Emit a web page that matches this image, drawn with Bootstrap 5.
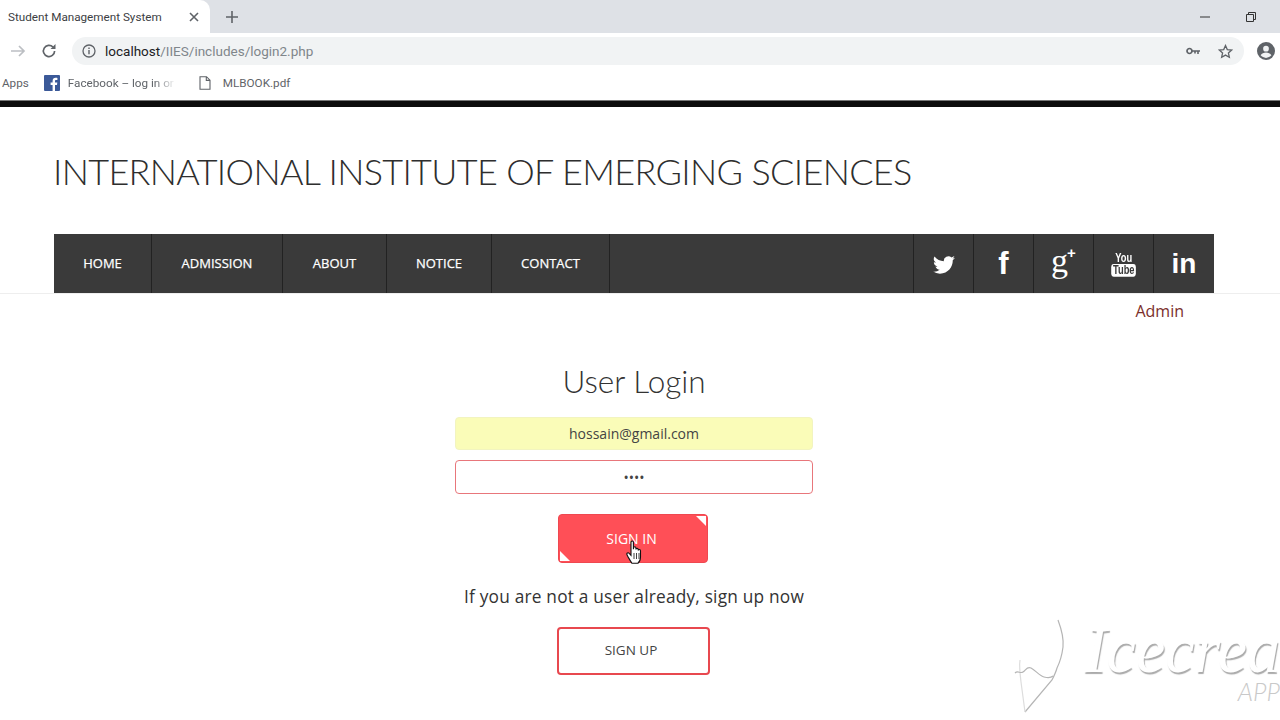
<!DOCTYPE html>
<html lang="en">
  <head>
    <meta charset="UTF-8" />
    <title>Student Management System</title>
    <link href="https://cdn.jsdelivr.net/npm/bootstrap@5.3.0/dist/css/bootstrap.min.css" rel="stylesheet" />
    <style>
      html, body { height: 720px; overflow: hidden; }
      body { font-family: "Open Sans", "Liberation Sans", sans-serif; background: #fff; color: #333; position: relative; }

      /* browser chrome */
      .tab-strip { height: 33px; background: #dee1e6; }
      .tab-active { width: 210px; background: #fff; border-top-right-radius: 10px; font: 11.7px "Roboto", "Liberation Sans", sans-serif; color: #3c4043; padding: 0 11px 0 8px; }
      .tab-plus { margin-left: 15px; }
      .win-btns { gap: 36px; padding-right: 24px; }
      .addr-row { height: 33px; padding: 3px 5px 0 10px; }
      .addr-pill { height: 28px; flex: 0 0 1172px; margin-left: 15px; background: #f1f3f4; border-radius: 14px; padding: 0 11px 0 10px; font: 13.5px "Roboto", "Liberation Sans", sans-serif; color: #80868b; }
      .addr-host { color: #202124; margin-left: 1px; }
      .reload-icon { margin-left: 15px; }
      .key-icon { margin-right: 18px; }
      .marks-row { height: 34px; font: 11.7px "Roboto", "Liberation Sans", sans-serif; color: #5f6368; padding-left: 2px; }
      .marks-fb { margin-left: 15px; }
      .marks-file { margin-left: 23px; }
      .marks-fade { width: 108px; white-space: nowrap; -webkit-mask-image: linear-gradient(90deg, #000 80%, transparent); mask-image: linear-gradient(90deg, #000 80%, transparent); }
      .chrome-edge { height: 7px; background: #0c0c0c; border-top: 1px solid #777; }

      /* site header */
      .site-head { border-bottom: 1px solid #eee; padding-left: 54px; }
      .site-title { height: 127px; margin: 0 0 0 -1px; padding-top: 43px; font: 300 36px/42px "Lato", "Liberation Sans", sans-serif; color: #2e2e2e; letter-spacing: -.67px; white-space: nowrap; }
      .site-nav { width: 1160px; height: 59px; background: #3a3a3a; }
      .nav-cell { height: 59px; display: flex; align-items: center; justify-content: center; color: #fff; font-size: 13px; font-weight: 500; -webkit-text-stroke: .25px #fff; text-decoration: none; border-right: 1px solid #222; }
      .nav-cell.w1 { width: 98px; }
      .nav-cell.w2 { width: 131px; }
      .nav-cell.w3 { width: 104px; }
      .nav-cell.w4 { width: 105px; }
      .nav-cell.w5 { width: 118px; }
      .soc-cell { width: 60px; height: 59px; display: flex; align-items: center; justify-content: center; color: #fff; text-decoration: none; border-left: 1px solid #222; }
      .soc-f { font: 700 31px/1 "Liberation Sans", sans-serif; }
      .soc-g { font: 400 34px/1 "Liberation Serif", serif; padding-bottom: 5px; }
      .soc-g sup { font: 700 15px/1 "Liberation Sans", sans-serif; top: -.6em; margin-left: -1px; }
      .soc-in { font: 700 28px/1 "Liberation Sans", sans-serif; width: 61px; }
      .soc-yt { text-align: center; font: 700 11px/11px "Liberation Sans Narrow", "Liberation Sans", sans-serif; }
      .soc-yt span { display: block; transform: scale(.85, 1.15); }
      .soc-yt b { display: block; background: #fff; color: #3a3a3a; border-radius: 3px; padding: 0 2px; }

      /* login area */
      .admin-link { padding: 5px 96px 0 0; height: 36px; text-align: right; font-size: 16px; color: #7b2f2a; text-decoration: none; display: block; }
      .login-wrap { width: 358px; margin-left: 455px; text-align: center; }
      .login-head { margin: 31px 0 16px; font: 300 31.5px/40px "Lato", "Liberation Sans", sans-serif; color: #333; }
      .login-input.form-control { height: 33px; font-size: 14px; text-align: center; border-radius: 4px; color: #444; padding: 0; box-shadow: none; }
      .input-mail.form-control { background: #fafcb8; border-color: #f2f4c0; margin-bottom: 10px; }
      .input-pass.form-control { height: 34px; border: 1px solid #e8767b; }
      .signin-btn { position: relative; overflow: hidden; display: block; width: 150px; height: 49px; margin: 20px auto 0 103px; background: #ff4f57; border: 1px solid #ef4850; border-radius: 4px; color: #fff; font-size: 14px; font-weight: 500; padding: 0 3px 0 0; }
      .signin-btn:hover { background: #ff4f57; color: #fff; }
      .corner-tr, .corner-bl { position: absolute; width: 0; height: 0; }
      .corner-tr { top: 1px; right: 1px; border-top: 10px solid #fff; border-left: 10px solid transparent; }
      .corner-bl { bottom: 1px; left: 1px; border-bottom: 10px solid #fff; border-right: 10px solid transparent; }
      .signup-note { margin: 22px -20px 18px; font-size: 17.3px; line-height: 24px; color: #333; letter-spacing: .2px; white-space: nowrap; }
      .signup-btn { display: block; width: 153px; height: 48px; margin-left: 102px; background: #fff; border: 2px solid #e8484f; border-radius: 4px; color: #444; font-size: 13.5px; padding: 0 5px 2px 0; }
      .hand-cursor { position: absolute; left: 626px; top: 540px; }

      /* recorder watermark */
      .wm-mark { position: absolute; left: 1014px; top: 617px; }
      .wm-name { position: absolute; right: 0; top: 625px; font: italic 400 66px/50px "Liberation Serif", serif; color: #fff; text-shadow: 1px 2px 1px #aaa; white-space: nowrap; }
      .wm-sub { position: absolute; right: 0; top: 680px; font: italic 300 25px/22px "Lato", sans-serif; color: #c9c9c9; }
    </style>
  </head>
  <body>
    <div class="tab-strip d-flex align-items-stretch">
      <div class="tab-active d-flex align-items-center justify-content-between">
        <span>Student Management System</span>
        <svg width="10" height="10" viewBox="0 0 10 10"><path d="M1 1l8 8M9 1l-8 8" stroke="#5f6368" stroke-width="1.6"/></svg>
      </div>
      <div class="tab-plus d-flex align-items-center">
        <svg width="14" height="14" viewBox="0 0 14 14"><path d="M7 1v12M1 7h12" stroke="#5f6368" stroke-width="1.6"/></svg>
      </div>
      <div class="win-btns ms-auto d-flex align-items-center">
        <svg width="10" height="10" viewBox="0 0 10 10"><path d="M0 5h10" stroke="#333" stroke-width="1"/></svg>
        <svg width="10" height="10" viewBox="0 0 10 10" fill="none" stroke="#333"><path d="M.5 2.500h7v7h-7zM2.500 2.500v-2h7v7h-2"/></svg>
      </div>
    </div>
    <div class="addr-row d-flex align-items-center">
      <svg width="16" height="14" viewBox="0 0 16 14"><path d="M1 7h13M9 2l5 5-5 5" fill="none" stroke="#bcbfc3" stroke-width="1.700"/></svg>
      <svg class="reload-icon" width="16" height="16" viewBox="0 0 16 16"><path d="M13.600 8a5.600 5.600 0 1 1-1.600-4" fill="none" stroke="#5f6368" stroke-width="1.700"/><path d="M14.500 1v5h-5z" fill="#5f6368"/></svg>
      <div class="addr-pill d-flex align-items-center">
        <svg width="14" height="14" viewBox="0 0 14 14" class="me-2"><circle cx="7" cy="7" r="6" fill="none" stroke="#5f6368" stroke-width="1.300"/><path d="M7 6v4.200M7 3.600v1.400" stroke="#5f6368" stroke-width="1.400"/></svg>
        <span><span class="addr-host">localhost</span>/IIES/includes/login2.php</span>
        <svg class="key-icon ms-auto" width="14" height="8" viewBox="0 0 14 8"><circle cx="3.500" cy="4" r="2.500" fill="none" stroke="#5f6368" stroke-width="1.700"/><path d="M6 3.200h8v1.600h-1.200V7h-1.600V4.800H9.800V6.400H8.200V4.800H6z" fill="#5f6368"/></svg>
        <svg width="15" height="15" viewBox="0 0 16 16"><path d="M8 1.600l1.900 4.300 4.700.5-3.500 3.100 1 4.600L8 11.800l-4.100 2.300 1-4.600-3.500-3.100 4.700-.5z" fill="none" stroke="#5f6368" stroke-width="1.400"/></svg>
      </div>
      <svg class="ms-auto" width="18" height="18" viewBox="0 0 17 17"><circle cx="8.500" cy="8.500" r="8.500" fill="#5f6368"/><circle cx="8.500" cy="6.300" r="2.700" fill="#f1f3f4"/><path d="M3.400 12.600c1-2 3.200-2.700 5.100-2.700s4.100.7 5.100 2.700c-1.200 1.500-3.100 2.400-5.100 2.400s-3.900-.9-5.100-2.400z" fill="#f1f3f4"/></svg>
    </div>
    <div class="marks-row d-flex align-items-center">
      <span>Apps</span>
      <svg class="marks-fb" width="16" height="16" viewBox="0 0 16 16"><rect width="16" height="16" rx="1" fill="#3b5998"/><path d="M11 16v-6h2l.3-2.400H11V6.100c0-.7.2-1.100 1.200-1.100h1.200V2.900c-.2 0-.9-.1-1.800-.1-1.800 0-3 1.100-3 3.100v1.700H6.600V10h2v6z" fill="#fff"/></svg>
      <span class="marks-fade ms-2">Facebook – log in or</span>
      <svg class="marks-file" width="12" height="14" viewBox="0 0 12 14"><path d="M1 .7h6.500l3.500 3.500v9.100H1zM7.300 .7v3.700h3.700" fill="none" stroke="#5f6368" stroke-width="1.100"/></svg>
      <span class="ms-2 ps-1">MLBOOK.pdf</span>
    </div>
    <div class="chrome-edge"></div>

    <header class="site-head">
      <h1 class="site-title">INTERNATIONAL INSTITUTE OF EMERGING SCIENCES</h1>
      <nav class="site-nav d-flex">
        <a class="nav-cell w1" href="#">HOME</a>
        <a class="nav-cell w2" href="#">ADMISSION</a>
        <a class="nav-cell w3" href="#">ABOUT</a>
        <a class="nav-cell w4" href="#">NOTICE</a>
        <a class="nav-cell w5" href="#">CONTACT</a>
        <div class="ms-auto d-flex">
          <a class="soc-cell" href="#"><svg width="22" height="22" viewBox="0 0 16 16"><path fill="#fff" d="M5.026 15c6.038 0 9.341-5.003 9.341-9.334 0-.14 0-.282-.006-.422A6.685 6.685 0 0 0 16 3.542a6.658 6.658 0 0 1-1.889.518 3.301 3.301 0 0 0 1.447-1.817 6.533 6.533 0 0 1-2.087 1.079A3.286 3.286 0 0 0 7.875 6.030a9.325 9.325 0 0 1-6.767-3.429 3.289 3.289 0 0 0 1.018 4.382A3.323 3.323 0 0 1 .64 6.575v.045a3.288 3.288 0 0 0 2.632 3.218 3.203 3.203 0 0 1-.865.115 3.230 3.230 0 0 1-.614-.057 3.283 3.283 0 0 0 3.067 2.277A6.588 6.588 0 0 1 .78 13.580a6.320 6.320 0 0 1-.78-.045A9.344 9.344 0 0 0 5.026 15z"/></svg></a>
          <a class="soc-cell soc-f" href="#">f</a>
          <a class="soc-cell soc-g" href="#">g<sup>+</sup></a>
          <a class="soc-cell soc-yt" href="#"><span>You<b>Tube</b></span></a>
          <a class="soc-cell soc-in" href="#">in</a>
        </div>
      </nav>
    </header>

    <a class="admin-link" href="#">Admin</a>

    <form class="login-wrap">
      <h2 class="login-head">User Login</h2>
      <input class="form-control login-input input-mail" type="text" value="hossain@gmail.com" />
      <input class="form-control login-input input-pass" type="password" value="1234" />
      <button class="btn signin-btn" type="button">SIGN IN<span class="corner-tr"></span><span class="corner-bl"></span></button>
      <p class="signup-note">If you are not a user already, sign up now</p>
      <button class="btn signup-btn" type="button">SIGN UP</button>
    </form>

    <svg class="hand-cursor" width="18" height="25" viewBox="0 0 18 25"><path d="M5 2.200c0-1.600 2.400-1.600 2.400 0v7l.2-1.400c0-1.500 2.300-1.500 2.300 0l.1 1.600c0-1.400 2.200-1.400 2.200.1l.1 1c.1-1.300 2.200-1.300 2.200.2v6.300c0 2.500-1.600 5.500-2.600 6.300H6c-1-1.200-2.100-3.300-3.400-5.400L1.100 14.900c-.9-1.700 1-2.800 2.100-1.500L5 15.400z" fill="#fff" stroke="#111" stroke-width="1.100"/><path d="M8 13v6M10.500 13v6M13 13v6" stroke="#111" stroke-width=".8"/></svg>

    <svg class="wm-mark" width="56" height="100" viewBox="0 0 56 100" fill="none" stroke="#b5b5b5" stroke-width="1.200"><path d="M44 3c3 8 6 18 5 27-1 8-3 15-6 21-1 4-3 8-5 12L11 95" /><path d="M6 43c-1 6 0 14 1 22l4 30" stroke="#ddd"/><path d="M1 56c3-3 5 1 8-1s4-6 8-4 9 8 13 9 7 1 9-1"/></svg>
    <div class="wm-name">Icecrea</div>
    <div class="wm-sub">APP</div>
  </body>
</html>
